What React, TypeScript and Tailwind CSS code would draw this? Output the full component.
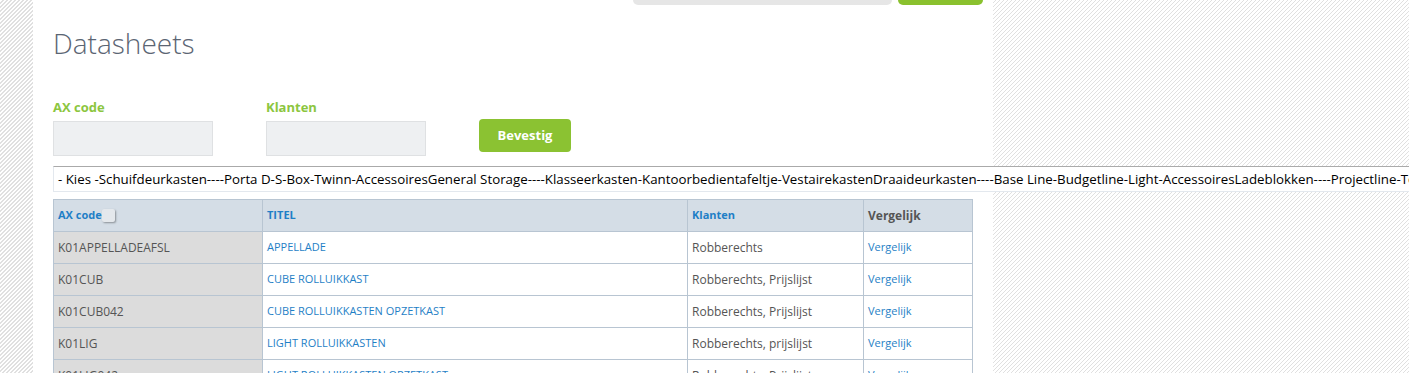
import React from "react";

const rows = [
  { code: "K01APPELLADEAFSL", titel: "APPELLADE", klant: "Robberechts" },
  { code: "K01CUB", titel: "CUBE ROLLUIKKAST", klant: "Robberechts, Prijslijst" },
  { code: "K01CUB042", titel: "CUBE ROLLUIKKASTEN OPZETKAST", klant: "Robberechts, Prijslijst" },
  { code: "K01LIG", titel: "LIGHT ROLLUIKKASTEN", klant: "Robberechts, prijslijst" },
  { code: "K01LIG042", titel: "LIGHT ROLLUIKKASTEN OPZETKAST", klant: "Robberechts, Prijslijst" },
];

export default function App() {
  return (
    <div
      className="w-[1409px] h-[373px] overflow-hidden bg-[repeating-linear-gradient(135deg,#ffffff_0px,#ffffff_1.9px,#e0e0e0_1.9px,#e0e0e0_2.83px)]"
      style={{ fontFamily: '"Open Sans", "Liberation Sans", sans-serif' }}
    >
      <div className="ml-[33px] w-[960px] h-[373px] bg-white pl-[20px] flex flex-col">
        {/* top search bar (cut off) */}
        <div className="flex justify-end pr-[10px] gap-[6px] mt-[-29px] h-[34px] shrink-0">
          <div className="w-[259px] h-[34px] bg-[#e6e6e6] rounded-[5px]" />
          <div className="w-[85px] h-[34px] bg-[#8ac12e] rounded-[5px]" />
        </div>

        <h1 className="mt-[19px] text-[28px] leading-[38px] font-light text-[#5b6573]">Datasheets</h1>

        <div className="mt-[38px] flex items-end">
          <div className="flex flex-col w-[213px]">
            <label className="text-[13px] leading-[14px] font-bold text-[#8cc63f]">AX code</label>
            <div className="mt-[7px] w-[160px] h-[35px] bg-[#eef0f2] border border-[#dfe1e3]" />
          </div>
          <div className="flex flex-col w-[213px]">
            <label className="text-[13px] leading-[14px] font-bold text-[#8cc63f]">Klanten</label>
            <div className="mt-[7px] w-[160px] h-[35px] bg-[#eef0f2] border border-[#dfe1e3]" />
          </div>
          <button className="mb-[4px] w-[92px] h-[33px] rounded-[4px] bg-[#8bc232] text-white text-[13px] font-bold">
            Bevestig
          </button>
        </div>

        <div className="mt-[10px] w-[1400px] h-[26px] shrink-0 bg-white border border-[#e3e8ee] border-t-[#aaaaaa] pl-[4px] text-[13.3px] leading-[24px] text-black whitespace-nowrap overflow-hidden">
          - Kies -Schuifdeurkasten----Porta D-S-Box-Twinn-AccessoiresGeneral Storage----Klasseerkasten-Kantoorbedientafeltje-VestairekastenDraaideurkasten----Base Line-Budgetline-Light-AccessoiresLadeblokken----Projectline-Topline
        </div>

        <table className="mt-[7px] w-[919px] border-collapse table-fixed shrink-0">
          <colgroup>
            <col className="w-[209px]" />
            <col className="w-[425px]" />
            <col className="w-[176px]" />
            <col className="w-[109px]" />
          </colgroup>
          <thead>
            <tr className="h-[32px] bg-[#d4dde6]">
              <th className="border border-[#b8c5d2] px-[4px] text-left text-[11px] font-bold text-[#1f7fc6]">
                <span className="inline-flex items-center">
                  AX code
                  <span className="inline-block w-[13px] h-[13px] bg-[#e4e8ec] rounded-[2px] shadow-[1px_1px_2px_rgba(0,0,0,0.35)]" />
                </span>
              </th>
              <th className="border border-[#b8c5d2] px-[4px] text-left text-[11px] font-bold text-[#1f7fc6]">TITEL</th>
              <th className="border border-[#b8c5d2] px-[4px] text-left text-[11px] font-bold text-[#1f7fc6]">Klanten</th>
              <th className="border border-[#b8c5d2] px-[4px] text-left text-[12px] font-bold text-[#555555]">Vergelijk</th>
            </tr>
          </thead>
          <tbody>
            {rows.map((r) => (
              <tr key={r.code} className="h-[32px]">
                <td className="border border-[#b8c5d2] bg-[#dcdcdc] px-[4px] text-[12px] text-[#555555]">{r.code}</td>
                <td className="border border-[#b8c5d2] bg-white px-[4px] text-[11px] text-[#1f7fc6]">{r.titel}</td>
                <td className="border border-[#b8c5d2] bg-white px-[4px] text-[12px] text-[#555555]">{r.klant}</td>
                <td className="border border-[#b8c5d2] bg-white px-[4px] text-[11px] text-[#1f7fc6]">Vergelijk</td>
              </tr>
            ))}
          </tbody>
        </table>
      </div>
    </div>
  );
}
